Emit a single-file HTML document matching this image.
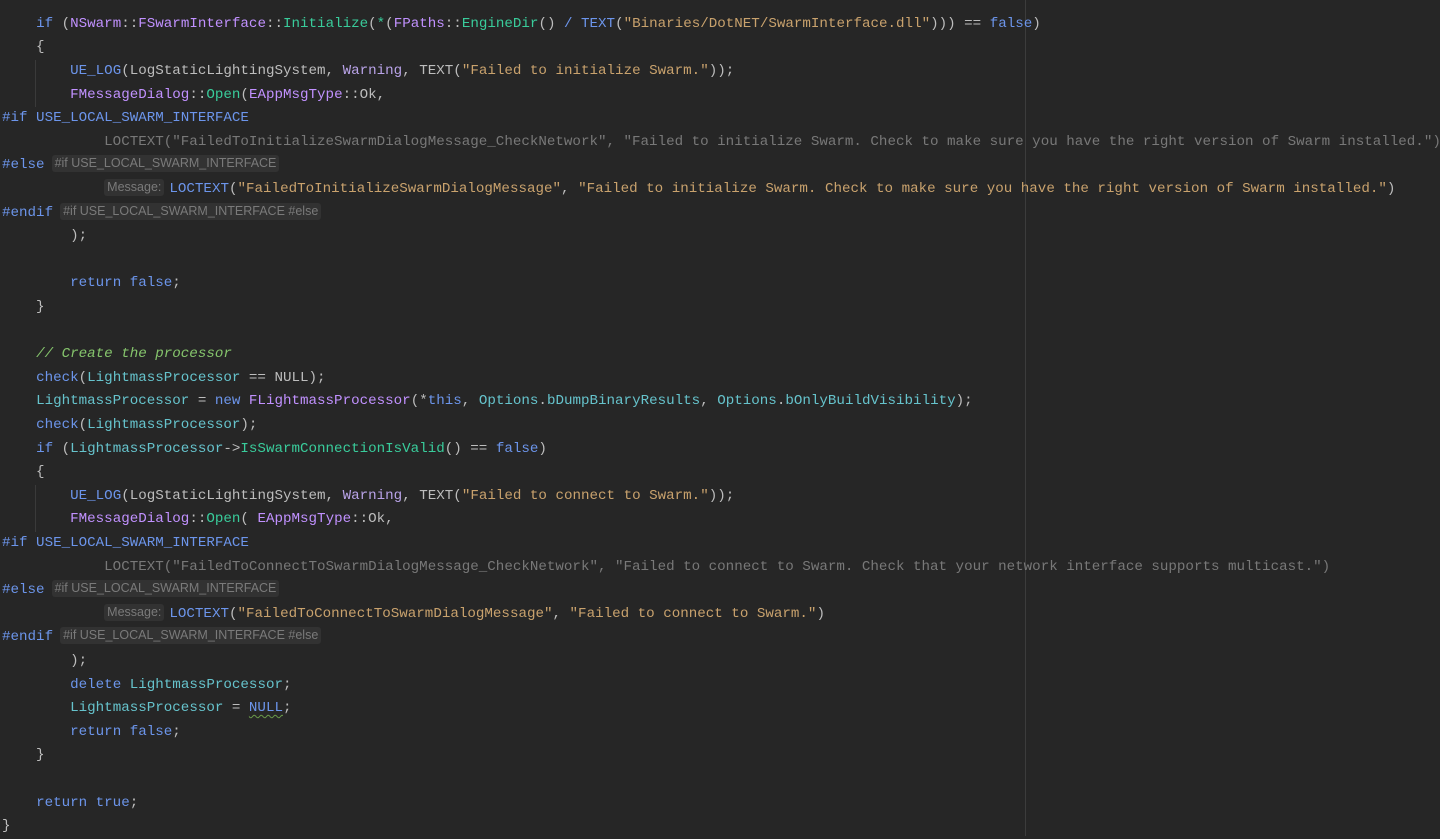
<!DOCTYPE html>
<html><head><meta charset="utf-8"><style>
html,body{margin:0;padding:0;background:#262626;width:1440px;height:836px;overflow:hidden}
.c{position:absolute;left:2px;font-family:"Liberation Mono",monospace;font-size:14.2px;line-height:23.6px;height:23.6px;white-space:pre;color:#BDBDBD}
.k{color:#6C95EB}.s{color:#C9A26D}.t{color:#C191FF}.m{color:#39CC9B}.f{color:#66C3CC}
.cm{color:#85C46C;font-style:italic}.g{color:#787878}.w{color:#B9A3E8}
.h{display:inline-block;font-family:"Liberation Sans",sans-serif;font-size:12.5px;line-height:17px;color:#7a7a7a;background:#323232;border-radius:3px;padding:0 3px;vertical-align:1px;margin-left:7px}
.u{text-decoration:underline wavy #6a9a4a;text-decoration-thickness:1px;text-underline-offset:3px}
.guide{position:absolute;left:35px;width:1px;background:#3a3a3a}
.vl{position:absolute;left:1025px;top:0;width:1px;height:836px;background:#3c3c3c}
</style></head><body>
<div class="vl"></div>
<div class="guide" style="top:60px;height:47px"></div>
<div class="guide" style="top:485px;height:47px"></div>
<div class="c" style="top:12.7px">    <span class="k">if</span> (<span class="t">NSwarm</span>::<span class="t">FSwarmInterface</span>::<span class="m">Initialize</span>(<span class="m">*</span>(<span class="t">FPaths</span>::<span class="m">EngineDir</span>() <span class="k">/</span> <span class="k">TEXT</span>(<span class="s">"Binaries/DotNET/SwarmInterface.dll"</span>))) == <span class="k">false</span>)</div>
<div class="c" style="top:36.3px">    {</div>
<div class="c" style="top:59.9px">        <span class="k">UE_LOG</span>(LogStaticLightingSystem, <span class="w">Warning</span>, TEXT(<span class="s">"Failed to initialize Swarm."</span>));</div>
<div class="c" style="top:83.5px">        <span class="t">FMessageDialog</span>::<span class="m">Open</span>(<span class="t">EAppMsgType</span>::Ok,</div>
<div class="c" style="top:107.1px"><span class="k">#if USE_LOCAL_SWARM_INTERFACE</span></div>
<div class="c g" style="top:130.7px">            LOCTEXT("FailedToInitializeSwarmDialogMessage_CheckNetwork", "Failed to initialize Swarm. Check to make sure you have the right version of Swarm installed.")</div>
<div class="c" style="top:154.3px"><span class="k">#else</span><span class="h">#if USE_LOCAL_SWARM_INTERFACE</span></div>
<div class="c" style="top:177.9px">            <span class="h" style="margin-left:0;margin-right:5px">Message:</span><span class="k">LOCTEXT</span>(<span class="s">"FailedToInitializeSwarmDialogMessage"</span>, <span class="s">"Failed to initialize Swarm. Check to make sure you have the right version of Swarm installed."</span>)</div>
<div class="c" style="top:201.5px"><span class="k">#endif</span><span class="h">#if USE_LOCAL_SWARM_INTERFACE #else</span></div>
<div class="c" style="top:225.1px">        );</div>
<div class="c" style="top:272.3px">        <span class="k">return false</span>;</div>
<div class="c" style="top:295.9px">    }</div>
<div class="c" style="top:343.1px">    <span class="cm">// Create the processor</span></div>
<div class="c" style="top:366.7px">    <span class="k">check</span>(<span class="f">LightmassProcessor</span> == NULL);</div>
<div class="c" style="top:390.3px">    <span class="f">LightmassProcessor</span> = <span class="k">new</span> <span class="t">FLightmassProcessor</span>(*<span class="k">this</span>, <span class="f">Options</span>.<span class="f">bDumpBinaryResults</span>, <span class="f">Options</span>.<span class="f">bOnlyBuildVisibility</span>);</div>
<div class="c" style="top:413.9px">    <span class="k">check</span>(<span class="f">LightmassProcessor</span>);</div>
<div class="c" style="top:437.5px">    <span class="k">if</span> (<span class="f">LightmassProcessor</span>-&gt;<span class="m">IsSwarmConnectionIsValid</span>() == <span class="k">false</span>)</div>
<div class="c" style="top:461.1px">    {</div>
<div class="c" style="top:484.7px">        <span class="k">UE_LOG</span>(LogStaticLightingSystem, <span class="w">Warning</span>, TEXT(<span class="s">"Failed to connect to Swarm."</span>));</div>
<div class="c" style="top:508.3px">        <span class="t">FMessageDialog</span>::<span class="m">Open</span>( <span class="t">EAppMsgType</span>::Ok,</div>
<div class="c" style="top:531.9px"><span class="k">#if USE_LOCAL_SWARM_INTERFACE</span></div>
<div class="c g" style="top:555.5px">            LOCTEXT("FailedToConnectToSwarmDialogMessage_CheckNetwork", "Failed to connect to Swarm. Check that your network interface supports multicast.")</div>
<div class="c" style="top:579.1px"><span class="k">#else</span><span class="h">#if USE_LOCAL_SWARM_INTERFACE</span></div>
<div class="c" style="top:602.7px">            <span class="h" style="margin-left:0;margin-right:5px">Message:</span><span class="k">LOCTEXT</span>(<span class="s">"FailedToConnectToSwarmDialogMessage"</span>, <span class="s">"Failed to connect to Swarm."</span>)</div>
<div class="c" style="top:626.3px"><span class="k">#endif</span><span class="h">#if USE_LOCAL_SWARM_INTERFACE #else</span></div>
<div class="c" style="top:649.9px">        );</div>
<div class="c" style="top:673.5px">        <span class="k">delete</span> <span class="f">LightmassProcessor</span>;</div>
<div class="c" style="top:697.1px">        <span class="f">LightmassProcessor</span> = <span class="k u">NULL</span>;</div>
<div class="c" style="top:720.7px">        <span class="k">return false</span>;</div>
<div class="c" style="top:744.3px">    }</div>
<div class="c" style="top:791.5px">    <span class="k">return true</span>;</div>
<div class="c" style="top:815.1px">}</div>
</body></html>
